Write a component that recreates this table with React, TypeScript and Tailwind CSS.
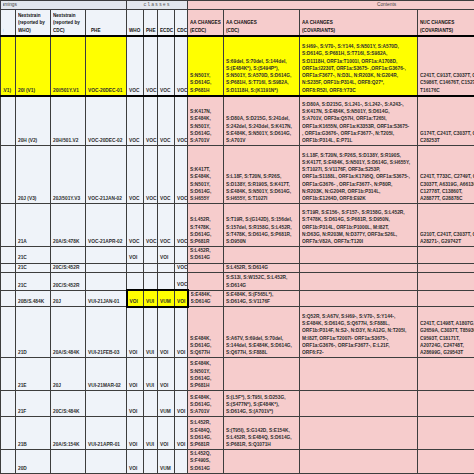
import React from 'react'

type Row = {
  h: string
  c0?: string
  c1?: string
  c2?: string
  c3?: string
  cls: string[]
  ecdc?: string[]
  cdc?: string[]
  cov?: string[]
  nuc?: string[]
  yellowAll?: boolean
  yellowCls?: boolean
}

const rows: Row[] = [
  {
    h: 'h-[60px]',
    c0: 'B.1.1.7 (20I/501Y.V1)',
    c1: '20I (V1)',
    c2: '20I/501Y.V1',
    c3: 'VOC-20DEC-01',
    cls: ['VOC', 'VOC', 'VOC', 'VOC'],
    ecdc: ['S:N501Y,', 'S:D614G,', 'S:P681H'],
    cdc: [
      'S:69del, S:70del, S:144del,',
      'S:(E484K*), S:(S494P*),',
      'S:N501Y, S:A570D, S:D614G,',
      'S:P681H, S:T716I, S:S982A,',
      'S:D1118H, S:(K1191N*)',
    ],
    cov: [
      'S:H69-, S:V70-, S:Y144, S:N501Y, S:A570D,',
      'S:D614G, S:P681H, S:T716I, S:S982A,',
      'S:D1118H, ORF1a:T1001I, ORF1a:A1708D,',
      'ORF1a:I2230T, ORF1a:S3675- ,ORF1a:G3676-,',
      'ORF1a:F3677-, N:D3L, N:R203K, N:G204R,',
      'N:S235F, ORF1b:P314L, ORF8:Q27*,',
      'ORF8:R52I, ORF8:Y73C',
    ],
    nuc: ['C241T, C913T, C3037T, C3267T,', 'C5986T, C14676T, C15279T,', 'T16176C'],
    yellowAll: true,
  },
  {
    h: 'h-[50px]',
    c1: '20H (V2)',
    c2: '20H/501.V2',
    c3: 'VOC-20DEC-02',
    cls: ['VOC', 'VOC', 'VOC', 'VOC'],
    ecdc: ['S:K417N,', 'S:E484K,', 'S:N501Y,', 'S:D614G,', 'S:A701V'],
    cdc: [
      'S:D80A, S:D215G, S:241del,',
      'S:242del, S:243del, S:K417N,',
      'S:E484K, S:N501Y, S:D614G,',
      'S:A701V',
    ],
    cov: [
      'S:D80A, S:D215G, S:L241-, S:L242-, S:A243-,',
      'S:K417N, S:E484K, S:N501Y, S:D614G,',
      'S:A701V, ORF3a:Q57H, ORF1a:T265I,',
      'ORF1a:K1655N, ORF1a:K3353R, ORF1a:S3675-',
      ', ORF1a:G3676-, ORF1a:F3677-, N:T205I,',
      'ORF1b:P314L, E:P71L',
    ],
    nuc: ['G174T, C241T, C3037T, G5230T,', 'C28253T'],
  },
  {
    h: 'h-[58px]',
    c1: '20J (V3)',
    c2: '20J/501Y.V3',
    c3: 'VOC-21JAN-02',
    cls: ['VOC', 'VOC', 'VOC', 'VOC'],
    ecdc: ['S:K417T,', 'S:E484K,', 'S:N501Y,', 'S:D614G,', 'S:H655Y'],
    cdc: [
      'S:L18F, S:T20N, S:P26S,',
      'S:D138Y, S:R190S, S:K417T,',
      'S:E484K, S:N501Y, S:D614G,',
      'S:H655Y, S:T1027I',
    ],
    cov: [
      'S:L18F, S:T20N, S:P26S, S:D138Y, S:R190S,',
      'S:K417T, S:E484K, S:N501Y, S:D614G, S:H655Y,',
      'S:T1027I, S:V1176F, ORF3a:S253P,',
      'ORF1a:S1188L, ORF1a:K1795Q, ORF1a:S3675-,',
      'ORF1a:G3676- , ORF1a:F3677-, N:P80R,',
      'N:R203K, N:G204R, ORF1b:P314L,',
      'ORF1b:E1264D, ORF8:E92K',
    ],
    nuc: ['C241T, T733C, C2749T, C3828T,', 'C3037T, A6319G, A6613G,', 'C12778T, C13860T,', 'A28877T, G28878C'],
  },
  {
    h: 'h-[43px]',
    c1: '21A',
    c2: '20A/S:478K',
    c3: 'VOC-21APR-02',
    cls: ['VOC', 'VOC', 'VOC', 'VOC'],
    ecdc: ['S:L452R,', 'S:T478K,', 'S:D614G,', 'S:P681R'],
    cdc: [
      'S:T19R, S:(G142D), S:156del,',
      'S:157del, S:R158G, S:L452R,',
      'S:T478K, S:D614G, S:P681R,',
      'S:D950N',
    ],
    cov: [
      'S:T19R, S:E156-, S:F157-, S:R158G, S:L452R,',
      'S:T478K, S:D614G, S:P681R, S:D950N,',
      'ORF1b:P314L, ORF1b:P1000L, M:I82T,',
      'N:D63G, N:R203M, N:D377Y, ORF3a:S26L,',
      'ORF7a:V82A, ORF7a:T120I',
    ],
    nuc: ['G210T, C241T, C3037T, C4181T,', 'A28271-, G29742T'],
  },
  {
    h: 'h-[16px]',
    c1: '21C',
    cls: ['VOI', '', 'VOI', ''],
    ecdc: ['S:L452R,', 'S:D614G'],
  },
  {
    h: 'h-[9px]',
    c1: '21C',
    c2: '20C/S:452R',
    cls: ['', '', '', 'VOC'],
    cdc: ['S:L452R, S:D614G'],
  },
  {
    h: 'h-[18px]',
    c1: '21C',
    c2: '20C/S:452R',
    cls: ['', '', '', 'VOC'],
    cdc: ['S:S13I, S:W152C, S:L452R,', 'S:D614G'],
  },
  {
    h: 'h-[16px]',
    c1: '20B/S.484K',
    c2: '20J',
    c3: 'VUI-21JAN-01',
    cls: ['VOI', 'VUI', 'VUM', 'VOI'],
    ecdc: ['S:E484K,', 'S:D614G'],
    cdc: ['S:E484K, S:(F565L*),', 'S:D614G, S:V1176F'],
    yellowCls: true,
  },
  {
    h: 'h-[51px]',
    c1: '21D',
    c2: '20A/S:484K',
    c3: 'VUI-21FEB-03',
    cls: ['VOI', 'VUI', 'VOI', 'VOI'],
    ecdc: ['S:E484K,', 'S:D614G,', 'S:Q677H'],
    cdc: ['S:A67V, S:69del, S:70del,', 'S:144del, S:E484K, S:D614G,', 'S:Q677H, S:F888L'],
    cov: [
      'S:Q52R, S:A67V, S:H69-, S:V70-, S:Y144-,',
      'S:E484K, S:D614G, S:Q677H, S:F888L,',
      'ORF1b:P314F, N:S2-, N:D3Y, N:A12G, N:T205I,',
      'M:I82T, ORF1a:T2007I- ORF1a:S3675-,',
      'ORF1a:G3676-, ORF1a:F3677-, E:L21F,',
      'ORF6:F2-',
    ],
    nuc: [
      'C241T, C1498T, A1807G,',
      'G2659A, C3037T, T8593C,',
      'C9593T, C18171T,',
      'A20724G, C24748T,',
      'A28699G, G29543T',
    ],
  },
  {
    h: 'h-[33px]',
    c1: '21E',
    c2: '20J',
    c3: 'VUI-21MAR-02',
    cls: ['VOI', 'VUI', 'VOI', ''],
    ecdc: ['S:E484K,', 'S:N501Y,', 'S:D614G,', 'S:P681H'],
  },
  {
    h: 'h-[26px]',
    c1: '21F',
    c2: '20C/S:484K',
    cls: ['VOI', '', 'VUM', 'VOI'],
    ecdc: ['S:E484K,', 'S:D614G,', 'S:A701V'],
    cdc: ['S:(L5F*), S:T95I, S:D253G,', 'S:(S477N*), S:(E484K*),', 'S:D614G, S:(A701V*)'],
  },
  {
    h: 'h-[33px]',
    c1: '21B',
    c2: '20A/S:154K',
    c3: 'VUI-21APR-01',
    cls: ['VOI', 'VUI', 'VOI', 'VOI'],
    ecdc: ['S:L452R,', 'S:E484Q,', 'S:D614G,', 'S:P681R'],
    cdc: ['S:(T95I), S:G142D, S:E154K,', 'S:L452R, S:E484Q, S:D614G,', 'S:P681R, S:Q1071H'],
  },
  {
    h: 'h-[23px]',
    c1: '20D',
    cls: ['VOI', '', 'VUM', ''],
    ecdc: ['S:L452Q,', 'S:F490S,', 'S:D614G'],
  },
]

const base = 'border border-[#3d3d3d] align-bottom px-[2px] pb-[1px] pt-0 whitespace-nowrap overflow-hidden'
const pale = 'bg-[#eff3f9]'
const pink = 'bg-[#f6cccc]'
const yellow = 'bg-[#ffff00]'

function Lines({ lines }: { lines?: string[] }) {
  if (!lines) return null
  return (
    <div className="overflow-hidden">
      {lines.map((l, i) => (
        <div key={i}>{l}</div>
      ))}
    </div>
  )
}

export default function App() {
  return (
    <div
      className="w-[474px] h-[474px] overflow-hidden bg-white text-[4.8px] font-bold leading-[7.2px] text-[#2e2e2e]"
      style={{ fontFamily: '"Liberation Sans", Arial, sans-serif' }}
    >
      <table className="table-fixed border-collapse w-[585px]">
        <colgroup>
          <col className="w-[15px]" />
          <col className="w-[35px]" />
          <col className="w-[35px]" />
          <col className="w-[41px]" />
          <col className="w-[17px]" />
          <col className="w-[14px]" />
          <col className="w-[17px]" />
          <col className="w-[13px]" />
          <col className="w-[36px]" />
          <col className="w-[76px]" />
          <col className="w-[118px]" />
          <col className="w-[168px]" />
        </colgroup>
        <tbody>
          {/* group header */}
          <tr className="h-[8px] font-normal">
            <td colSpan={4} className={`${base} bg-[#e3e7ed] align-middle text-[#444]`}>
              <div className="overflow-hidden">
                <span className="-ml-[5px] inline-block">Namings</span>
              </div>
            </td>
            <td
              colSpan={4}
              className={`${base} bg-[#e3e7ed] align-middle text-center text-[#555] tracking-[1px]`}
              style={{ fontFamily: '"Liberation Mono", monospace' }}
            >
              classes
            </td>
            <td colSpan={4} className={`${base} ${pink} align-middle text-center text-[#444]`}>
              Contents
            </td>
          </tr>

          {/* column header */}
          <tr className="h-[26px] text-[4.6px] text-[#111]">
            <td className={`${base} ${pale}`}>
              <div className="flex justify-end overflow-hidden pr-[10px]">
                <span>(ECDC)</span>
              </div>
            </td>
            <td className={`${base} ${pale}`}>
              <Lines lines={['Nextstrain', '(reported by', 'WHO)']} />
            </td>
            <td className={`${base} ${pale}`}>
              <Lines lines={['Nextstrain', '(reported by', 'CDC)']} />
            </td>
            <td className={`${base} ${pale} pl-[5px]`}>PHE</td>
            <td className={`${base} ${pale}`}>WHO</td>
            <td className={`${base} ${pale}`}>PHE</td>
            <td className={`${base} ${pale}`}>ECDC</td>
            <td className={`${base} ${pale}`}>CDC</td>
            <td className={`${base} ${pink}`}>
              <Lines lines={['AA CHANGES', '(ECDC)']} />
            </td>
            <td className={`${base} ${pink}`}>
              <Lines lines={['AA CHANGES', '(CDC)']} />
            </td>
            <td className={`${base} ${pink}`}>
              <Lines lines={['AA CHANGES', '(COVARIANTS)']} />
            </td>
            <td className={`${base} ${pink}`}>
              <Lines lines={['NUC CHANGES', '(COVARIANTS)']} />
            </td>
          </tr>

          {rows.map((r, i) => {
            const thickRow = r.yellowAll ? 'border-y-2 border-y-black' : ''
            const left = r.yellowAll ? yellow : pale
            const right = r.yellowAll ? yellow : pink
            return (
              <tr key={i} className={r.h}>
                <td className={`${base} ${left} ${thickRow}`}>
                  {r.c0 && (
                    <div className="flex justify-end overflow-hidden pr-[2px]">
                      <span>{r.c0}</span>
                    </div>
                  )}
                </td>
                <td className={`${base} ${left} ${thickRow}`}>{r.c1}</td>
                <td className={`${base} ${left} ${thickRow}`}>{r.c2}</td>
                <td className={`${base} ${left} ${thickRow}`}>{r.c3}</td>
                {r.cls.map((c, j) => {
                  let extra = ''
                  if (r.yellowCls) {
                    extra = `${yellow} border-y-2 border-y-black`
                    if (j === 0) extra += ' border-l-2 border-l-black'
                    if (j === 3) extra += ' border-r-2 border-r-black'
                  } else {
                    extra = `${pale} ${thickRow}`
                  }
                  return (
                    <td key={j} className={`${base} ${extra}`}>
                      {c}
                    </td>
                  )
                })}
                <td className={`${base} ${right} ${thickRow}`}>
                  <Lines lines={r.ecdc} />
                </td>
                <td className={`${base} ${right} ${thickRow}`}>
                  <Lines lines={r.cdc} />
                </td>
                <td className={`${base} ${right} ${thickRow}`}>
                  <Lines lines={r.cov} />
                </td>
                <td className={`${base} ${pink} ${thickRow}`}>
                  <Lines lines={r.nuc} />
                </td>
              </tr>
            )
          })}
        </tbody>
      </table>
      <div className="h-[6px] w-full bg-[#6e6e6e]" />
    </div>
  )
}
